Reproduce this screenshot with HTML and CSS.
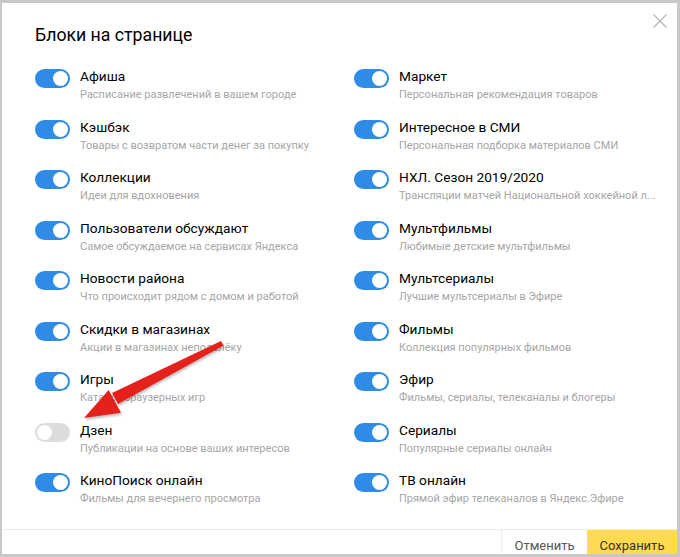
FILE: index.html
```html
<!DOCTYPE html>
<html lang="ru">
<head>
<meta charset="utf-8">
<title>Блоки на странице</title>
<link rel="stylesheet" href="styles.css">
</head>
<body>
<div class="frame">
  <div class="header">
    <h1 class="title">Блоки на странице</h1>
    <button class="close" aria-label="Закрыть">
      <svg width="16" height="16" viewBox="0 0 16 16"><path d="M1.5 1.5L14.5 14.5M14.5 1.5L1.5 14.5" stroke="#b8b8b8" stroke-width="1.3" fill="none"/></svg>
    </button>
  </div>
  <div class="grid">
    <div class="item"><span class="toggle on"></span><div class="text"><div class="name">Афиша</div><div class="desc">Расписание развлечений в вашем городе</div></div></div>
    <div class="item"><span class="toggle on"></span><div class="text"><div class="name">Маркет</div><div class="desc">Персональная рекомендация товаров</div></div></div>
    <div class="item"><span class="toggle on"></span><div class="text"><div class="name">Кэшбэк</div><div class="desc">Товары с возвратом части денег за покупку</div></div></div>
    <div class="item"><span class="toggle on"></span><div class="text"><div class="name">Интересное в СМИ</div><div class="desc">Персональная подборка материалов СМИ</div></div></div>
    <div class="item"><span class="toggle on"></span><div class="text"><div class="name">Коллекции</div><div class="desc">Идеи для вдохновения</div></div></div>
    <div class="item"><span class="toggle on"></span><div class="text"><div class="name">НХЛ. Сезон 2019/2020</div><div class="desc">Трансляции матчей Национальной хоккейной л...</div></div></div>
    <div class="item"><span class="toggle on"></span><div class="text"><div class="name">Пользователи обсуждают</div><div class="desc">Самое обсуждаемое на сервисах Яндекса</div></div></div>
    <div class="item"><span class="toggle on"></span><div class="text"><div class="name">Мультфильмы</div><div class="desc">Любимые детские мультфильмы</div></div></div>
    <div class="item"><span class="toggle on"></span><div class="text"><div class="name">Новости района</div><div class="desc">Что происходит рядом с домом и работой</div></div></div>
    <div class="item"><span class="toggle on"></span><div class="text"><div class="name">Мультсериалы</div><div class="desc">Лучшие мультсериалы в Эфире</div></div></div>
    <div class="item"><span class="toggle on"></span><div class="text"><div class="name">Скидки в магазинах</div><div class="desc">Акции в магазинах неподалёку</div></div></div>
    <div class="item"><span class="toggle on"></span><div class="text"><div class="name">Фильмы</div><div class="desc">Коллекция популярных фильмов</div></div></div>
    <div class="item"><span class="toggle on"></span><div class="text"><div class="name">Игры</div><div class="desc">Каталог браузерных игр</div></div></div>
    <div class="item"><span class="toggle on"></span><div class="text"><div class="name">Эфир</div><div class="desc">Фильмы, сериалы, телеканалы и блогеры</div></div></div>
    <div class="item"><span class="toggle"></span><div class="text"><div class="name">Дзен</div><div class="desc">Публикации на основе ваших интересов</div></div></div>
    <div class="item"><span class="toggle on"></span><div class="text"><div class="name">Сериалы</div><div class="desc">Популярные сериалы онлайн</div></div></div>
    <div class="item"><span class="toggle on"></span><div class="text"><div class="name">КиноПоиск онлайн</div><div class="desc">Фильмы для вечернего просмотра</div></div></div>
    <div class="item"><span class="toggle on"></span><div class="text"><div class="name">ТВ онлайн</div><div class="desc">Прямой эфир телеканалов в Яндекс.Эфире</div></div></div>
  </div>
  <div class="footer">
    <button class="btn cancel">Отменить</button>
    <button class="btn save">Сохранить</button>
  </div>
  <svg class="arrow" width="680" height="557" viewBox="0 0 680 557">
    <polygon points="221,341 223.5,345.5 118,404 112,393" fill="#e4211b"/>
    <polygon points="84,418 108.6,389.9 121,412.7" fill="#e4211b"/>
  </svg>
</div>
</body>
</html>
```

FILE: styles.css
```css
* { box-sizing: border-box; }
html, body { margin: 0; padding: 0; background: #fff; }
body { font-family: Roboto, "Noto Sans", "Liberation Sans", sans-serif; color: #000; }

.frame {
  position: relative;
  width: 680px;
  height: 557px;
  border: 3px solid #c8c8c8;
  border-left-width: 2px;
  display: flex;
  flex-direction: column;
  background: #fff;
}

.header { padding: 20px 0 0 33px; }
.title {
  margin: 0;
  font-size: 17.7px;
  line-height: 24px;
  font-weight: 400;
  color: #000;
}
.close {
  position: absolute;
  top: 10px;
  right: 9px;
  width: 16px;
  height: 16px;
  padding: 0;
  border: 0;
  background: none;
  display: flex;
}

.grid {
  margin-top: 20px;
  padding-left: 33px;
  display: grid;
  grid-template-columns: 319px 300px;
  row-gap: 15.5px;
}
.item { display: flex; align-items: flex-start; gap: 10px; height: 35px; }
.toggle {
  flex: none;
  width: 35px;
  height: 19px;
  margin-top: 2px;
  border-radius: 10px;
  background: #dcdcdc;
  position: relative;
}
.toggle::after {
  content: "";
  position: absolute;
  top: 2px;
  left: 2px;
  width: 15px;
  height: 15px;
  border-radius: 50%;
  background: #fff;
}
.toggle.on { background: #2f8ce6; }
.toggle.on::after { left: auto; right: 2px; }

.name { font-size: 13.7px; line-height: 19px; color: #000; white-space: nowrap; }
.desc { font-size: 11px; line-height: 16px; color: #a6a6a6; margin-top: 1px; white-space: nowrap; }

.footer {
  margin-top: auto;
  border-top: 1px solid #ececec;
  display: flex;
  justify-content: flex-end;
  height: 25px;
}
.btn {
  border: 0;
  margin: 0;
  font-family: inherit;
  font-size: 13px;
  line-height: 16px;
  padding: 7px 0 0;
  height: 24px;
  background: #fff;
  text-align: center;
}
.cancel { width: 86px; border-left: 1px solid #ececec; color: #555; }
.save { width: 90px; background: #ffdb4d; color: #333; }

.arrow {
  position: absolute;
  left: -2px;
  top: -3px;
  pointer-events: none;
  filter: drop-shadow(1px 2px 1px rgba(0,0,0,0.25));
}
```
